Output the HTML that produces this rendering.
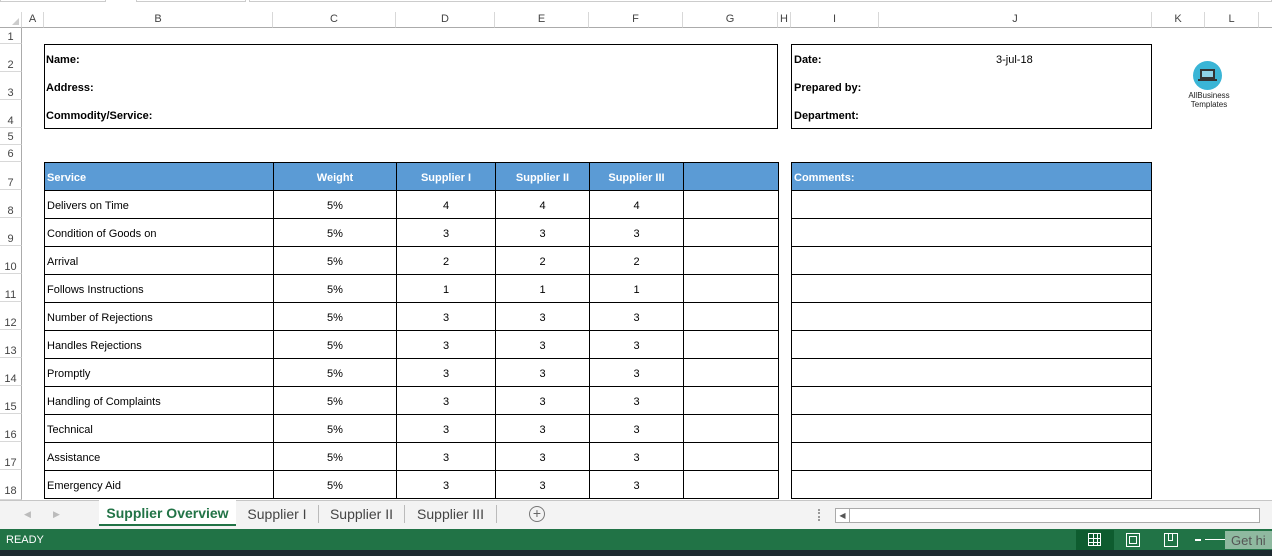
<!DOCTYPE html>
<html><head><meta charset="utf-8"><style>
*{margin:0;padding:0;box-sizing:border-box}
body{width:1272px;height:556px;overflow:hidden;background:#fff;font-family:"Liberation Sans",Arial,sans-serif;position:relative}
.a{position:absolute}
.ch{position:absolute;top:12px;height:16px;border-right:1px solid #d8d8d8;border-bottom:1px solid #ababab;font-size:11px;color:#444;text-align:center;line-height:15px}
.rh{position:absolute;left:0;width:22px;border-right:1px solid #ababab;border-bottom:1px solid #d8d8d8;font-size:11px;color:#444;text-align:center}
table{position:absolute;border-collapse:collapse;table-layout:fixed;font-size:11px}
td{border:1px solid #000;height:28px;padding:2px 2px 0;white-space:nowrap;overflow:hidden;text-align:center}
td.l{text-align:left}
tr.h td{background:#5b9bd5;color:#fff;font-weight:bold}
.box{position:absolute;border:1px solid #000}
.lbl{position:absolute;font-size:11px;font-weight:bold}
</style></head><body>
<div class="a" style="left:0;top:0;width:106px;height:2px;border:1px solid #ccc;border-top:0"></div>
<div class="a" style="left:136px;top:0;width:110px;height:2px;border:1px solid #ccc;border-top:0"></div>
<div class="a" style="left:249px;top:0;width:1023px;height:2px;border:1px solid #ccc;border-top:0"></div>
<div class="ch" style="left:0;width:22px"><span style="position:absolute;right:2px;bottom:2px;width:0;height:0;border-left:7px solid transparent;border-bottom:7px solid #ccc"></span></div>
<div class="ch" style="left:22px;width:22px">A</div>
<div class="ch" style="left:44px;width:229px">B</div>
<div class="ch" style="left:273px;width:123px">C</div>
<div class="ch" style="left:396px;width:99px">D</div>
<div class="ch" style="left:495px;width:94px">E</div>
<div class="ch" style="left:589px;width:94px">F</div>
<div class="ch" style="left:683px;width:95px">G</div>
<div class="ch" style="left:778px;width:13px">H</div>
<div class="ch" style="left:791px;width:88px">I</div>
<div class="ch" style="left:879px;width:273px">J</div>
<div class="ch" style="left:1152px;width:53px">K</div>
<div class="ch" style="left:1205px;width:54px">L</div>
<div class="ch" style="left:1259px;width:13px;border-right:0"></div>

<div class="rh" style="top:28px;height:16px;line-height:18px">1</div>
<div class="rh" style="top:44px;height:28px;line-height:42px">2</div>
<div class="rh" style="top:72px;height:28px;line-height:42px">3</div>
<div class="rh" style="top:100px;height:28px;line-height:42px">4</div>
<div class="rh" style="top:128px;height:17px;line-height:18px">5</div>
<div class="rh" style="top:145px;height:17px;line-height:18px">6</div>
<div class="rh" style="top:162px;height:28px;line-height:42px">7</div>
<div class="rh" style="top:190px;height:28px;line-height:42px">8</div>
<div class="rh" style="top:218px;height:28px;line-height:42px">9</div>
<div class="rh" style="top:246px;height:28px;line-height:42px">10</div>
<div class="rh" style="top:274px;height:28px;line-height:42px">11</div>
<div class="rh" style="top:302px;height:28px;line-height:42px">12</div>
<div class="rh" style="top:330px;height:28px;line-height:42px">13</div>
<div class="rh" style="top:358px;height:28px;line-height:42px">14</div>
<div class="rh" style="top:386px;height:28px;line-height:42px">15</div>
<div class="rh" style="top:414px;height:28px;line-height:42px">16</div>
<div class="rh" style="top:442px;height:28px;line-height:42px">17</div>
<div class="rh" style="top:470px;height:30px;line-height:42px">18</div>

<div class="box" style="left:44px;top:44px;width:734px;height:85px"></div>
<div class="lbl" style="left:46px;top:54px">Name:</div>
<div class="lbl" style="left:46px;top:82px">Address:</div>
<div class="lbl" style="left:46px;top:110px">Commodity/Service:</div>
<div class="box" style="left:791px;top:44px;width:361px;height:85px"></div>
<div class="lbl" style="left:794px;top:54px">Date:</div>
<div class="lbl" style="left:996px;top:54px;font-weight:normal">3-jul-18</div>
<div class="lbl" style="left:794px;top:82px">Prepared by:</div>
<div class="lbl" style="left:794px;top:110px">Department:</div>

<div class="a" style="left:1193px;top:61px;width:29px;height:29px;border-radius:50%;background:#3ab5d6"></div>
<div class="a" style="left:1200px;top:69px;width:15px;height:10px;border:2px solid #333;background:#8fd3e8"></div>
<div class="a" style="left:1198px;top:79px;width:19px;height:2px;background:#333"></div>
<div class="a" style="left:1180px;top:91px;width:58px;font-size:8px;line-height:9px;text-align:center;color:#222">AllBusiness<br>Templates</div>

<table style="left:44px;top:162px;width:734px">
<colgroup><col style="width:229px"><col style="width:123px"><col style="width:99px"><col style="width:94px"><col style="width:94px"><col style="width:95px"></colgroup>
<tr class="h"><td class="l">Service</td><td>Weight</td><td>Supplier I</td><td>Supplier II</td><td>Supplier III</td><td></td></tr>
<tr><td class="l">Delivers on Time</td><td>5%</td><td>4</td><td>4</td><td>4</td><td></td></tr>
<tr><td class="l">Condition of Goods on</td><td>5%</td><td>3</td><td>3</td><td>3</td><td></td></tr>
<tr><td class="l">Arrival</td><td>5%</td><td>2</td><td>2</td><td>2</td><td></td></tr>
<tr><td class="l">Follows Instructions</td><td>5%</td><td>1</td><td>1</td><td>1</td><td></td></tr>
<tr><td class="l">Number of Rejections</td><td>5%</td><td>3</td><td>3</td><td>3</td><td></td></tr>
<tr><td class="l">Handles Rejections</td><td>5%</td><td>3</td><td>3</td><td>3</td><td></td></tr>
<tr><td class="l">Promptly</td><td>5%</td><td>3</td><td>3</td><td>3</td><td></td></tr>
<tr><td class="l">Handling of Complaints</td><td>5%</td><td>3</td><td>3</td><td>3</td><td></td></tr>
<tr><td class="l">Technical</td><td>5%</td><td>3</td><td>3</td><td>3</td><td></td></tr>
<tr><td class="l">Assistance</td><td>5%</td><td>3</td><td>3</td><td>3</td><td></td></tr>
<tr><td class="l">Emergency Aid</td><td>5%</td><td>3</td><td>3</td><td>3</td><td></td></tr>
</table>
<table style="left:791px;top:162px;width:361px">
<tr class="h"><td class="l">Comments:</td></tr>
<tr><td></td></tr><tr><td></td></tr><tr><td></td></tr><tr><td></td></tr><tr><td></td></tr><tr><td></td></tr><tr><td></td></tr><tr><td></td></tr><tr><td></td></tr><tr><td></td></tr><tr><td></td></tr>
</table>

<div class="a" style="left:0;top:500px;width:1272px;height:29px;background:#f3f3f3;border-top:1px solid #c6c6c6"></div>
<div class="a" style="left:24px;top:509px;font-size:9px;color:#bbb">&#9664;</div>
<div class="a" style="left:53px;top:509px;font-size:9px;color:#bbb">&#9654;</div>
<div class="a" style="left:99px;top:500px;width:137px;height:26px;background:#fff;border-bottom:2px solid #217346;font-size:14px;font-weight:bold;color:#217346;text-align:center;line-height:27px">Supplier Overview</div>
<div class="a" style="left:236px;top:505px;width:83px;height:18px;border-right:1px solid #bbb;font-size:14px;color:#444;text-align:center;line-height:19px">Supplier I</div>
<div class="a" style="left:319px;top:505px;width:86px;height:18px;border-right:1px solid #bbb;font-size:14px;color:#444;text-align:center;line-height:19px">Supplier II</div>
<div class="a" style="left:405px;top:505px;width:92px;height:18px;border-right:1px solid #bbb;font-size:14px;color:#444;text-align:center;line-height:19px">Supplier III</div>
<div class="a" style="left:529px;top:506px;width:16px;height:16px;border:1.5px solid #777;border-radius:50%;font-size:14px;line-height:12px;text-align:center;color:#666">+</div>
<div class="a" style="left:818px;top:509px;width:2px;height:12px;border-left:2px dotted #999"></div>
<div class="a" style="left:835px;top:508px;width:425px;height:15px;background:#fff;border:1px solid #aaa"></div>
<div class="a" style="left:836px;top:509px;width:14px;height:13px;border-right:1px solid #aaa;font-size:8px;color:#555;text-align:center;line-height:13px">&#9664;</div>

<div class="a" style="left:0;top:529px;width:1272px;height:21px;background:#217346"></div>
<div class="a" style="left:6px;top:534px;font-size:11px;color:#fff">READY</div>
<div class="a" style="left:1076px;top:530px;width:38px;height:20px;background:#0e5c2f"></div>
<div class="a" style="left:1088px;top:533px;width:13px;height:13px;border:1px solid #fff;background:linear-gradient(#fff,#fff) 4px 0/1px 100% no-repeat,linear-gradient(#fff,#fff) 8px 0/1px 100% no-repeat,linear-gradient(#fff,#fff) 0 4px/100% 1px no-repeat,linear-gradient(#fff,#fff) 0 8px/100% 1px no-repeat"></div>
<div class="a" style="left:1126px;top:533px;width:14px;height:14px;border:1px solid #fff"><div style="margin:2px;height:8px;border:1px solid #fff"></div></div>
<div class="a" style="left:1164px;top:533px;width:14px;height:14px;border:1px solid #fff"><div style="margin-left:3px;width:5px;height:7px;border:1px solid #fff;border-top:0"></div></div>
<div class="a" style="left:1195px;top:539px;width:6px;height:2px;background:#fff"></div>
<div class="a" style="left:1205px;top:539px;width:67px;height:1px;background:#fff"></div>
<div class="a" style="left:1225px;top:531px;width:47px;height:18px;background:#8fb9a0;font-size:13px;color:#555;padding-left:6px;line-height:19px;overflow:hidden;white-space:nowrap">Get hi</div>
<div class="a" style="left:0;top:550px;width:1272px;height:6px;background:#1e2a30"></div>
</body></html>
